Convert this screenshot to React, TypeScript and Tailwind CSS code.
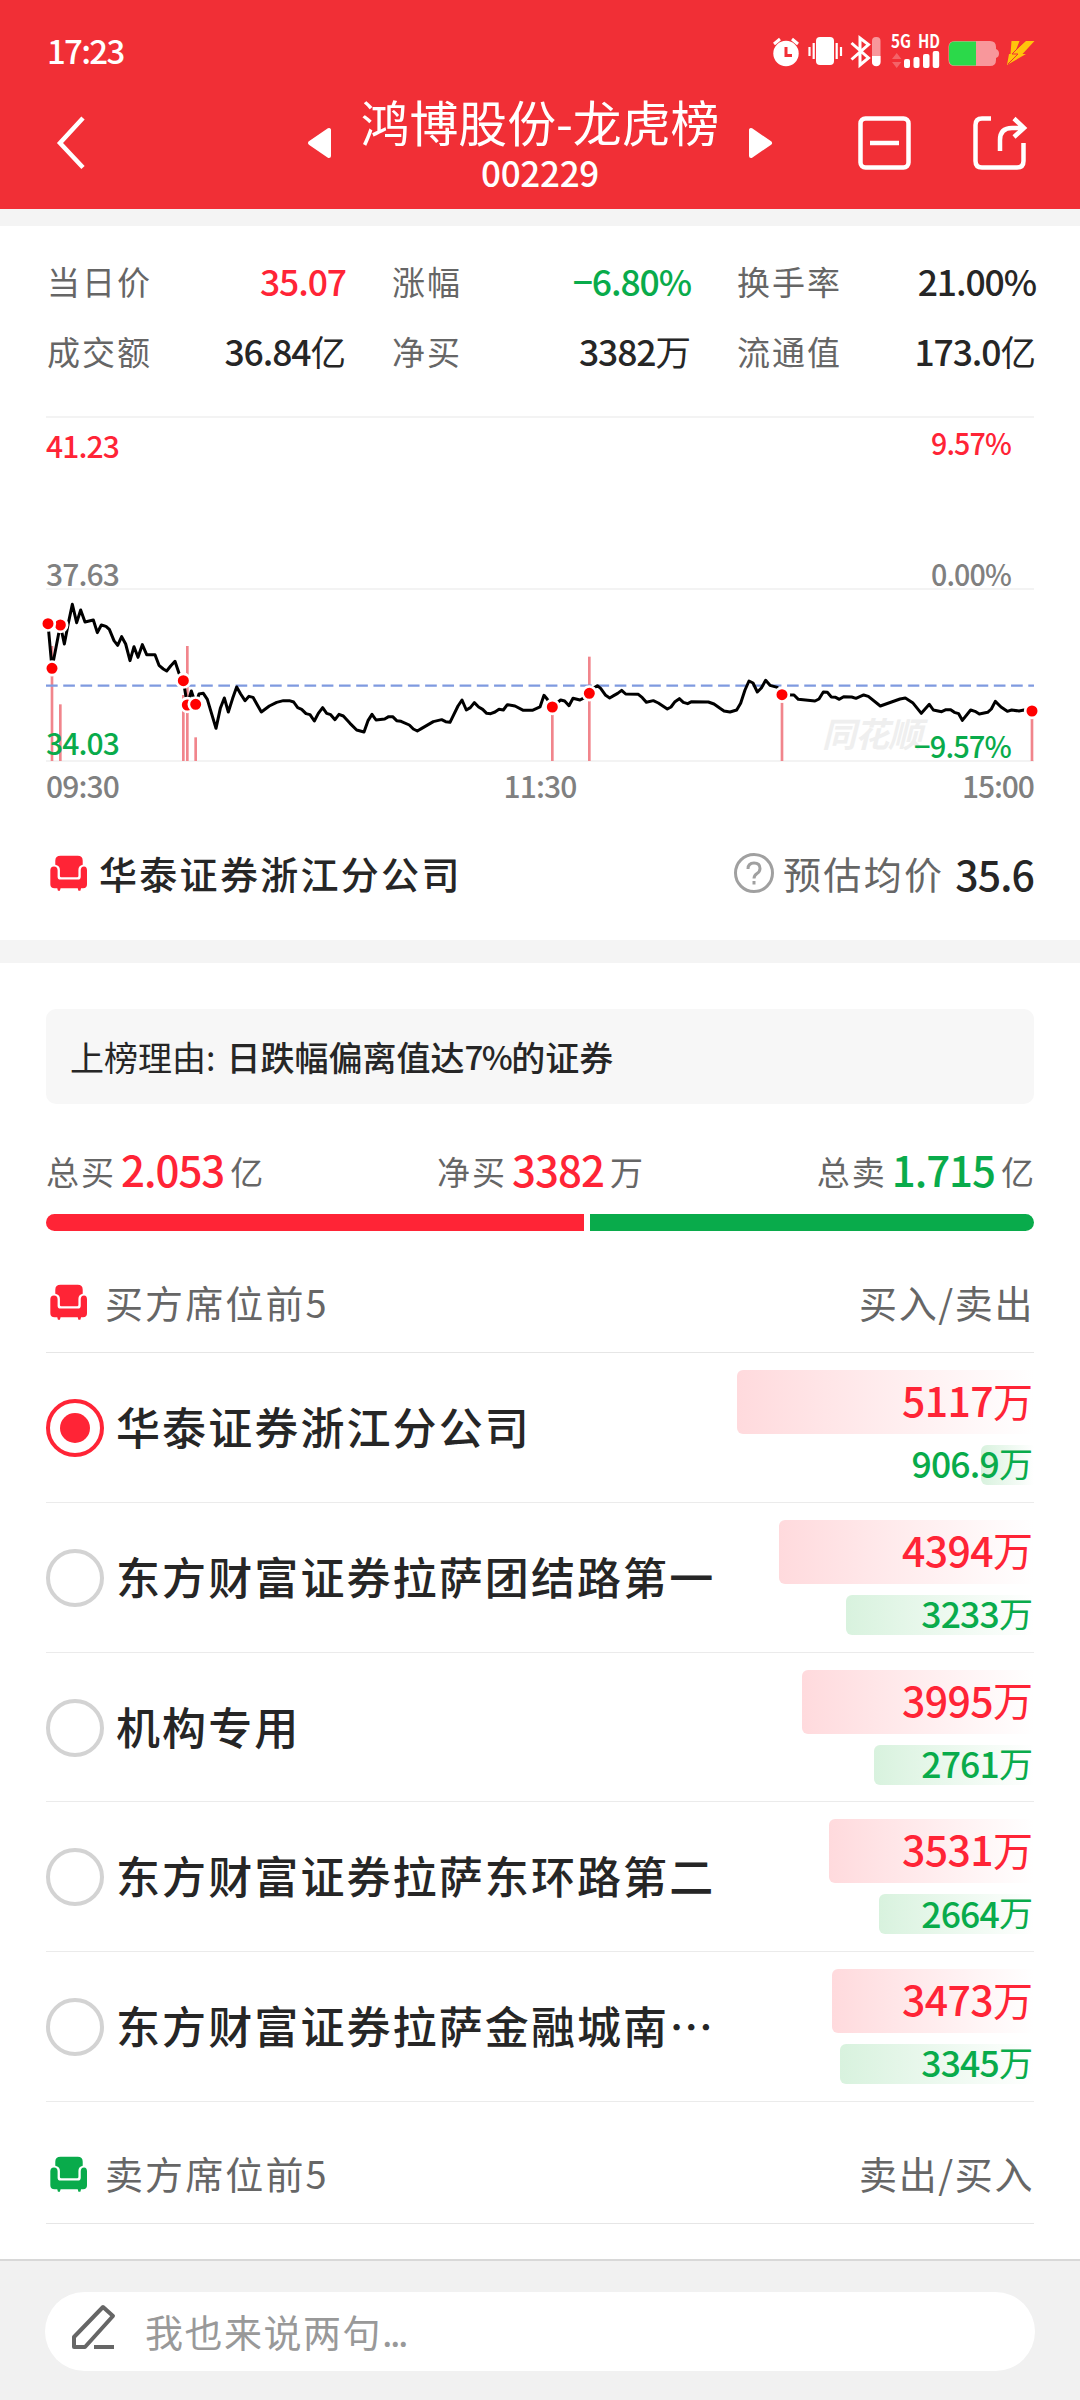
import React from "react";

const RED = "#ff2436";
const GREEN = "#09ab4b";

const quotes = [
  { label: "当日价", value: "35.07", unit: "", color: "text-[#ff2436]" },
  { label: "涨幅", value: "−6.80%", unit: "", color: "text-[#09ab4b]" },
  { label: "换手率", value: "21.00%", unit: "", color: "text-[#262626]" },
  { label: "成交额", value: "36.84", unit: "亿", color: "text-[#262626]" },
  { label: "净买", value: "3382", unit: "万", color: "text-[#262626]" },
  { label: "流通值", value: "173.0", unit: "亿", color: "text-[#262626]" },
];

const seats = [
  { name: "华泰证券浙江分公司", buy: 5117, sell: 906.9 },
  { name: "东方财富证券拉萨团结路第一", buy: 4394, sell: 3233 },
  { name: "机构专用", buy: 3995, sell: 2761 },
  { name: "东方财富证券拉萨东环路第二", buy: 3531, sell: 2664 },
  { name: "东方财富证券拉萨金融城南⋯", buy: 3473, sell: 3345 },
];

// width in px of the bar for one 万
const BAR_SCALE = 297 / 5117;

const pricePoints =
  "144,191 156,325 181,195 193,252 205,190 217,133 230,188 242,150 255,186 280,180 292,218 304,195 318,199 328,208 342,242 353,256 365,230 377,252 390,302 402,260 414,292 427,254 440,284 465,284 477,316 490,327 500,333 512,318 525,304 537,340 550,362 562,435 574,393 587,433 597,402 610,400 622,418 648,505 661,445 673,414 685,456 698,415 710,381 722,402 735,422 747,409 759,412 784,456 808,438 830,427 850,422 868,422 881,426 893,443 905,448 918,461 930,464 943,483 955,460 968,443 980,460 992,464 1005,479 1017,463 1030,468 1050,490 1070,510 " +
  "1092,516 1104,482 1116,463 1128,480 1154,477 1166,470 1178,470 1190,482 1203,484 1228,495 1240,507 1252,513 1264,506 1300,485 1325,479 1337,485 1350,487 1374,438 1386,420 1399,450 1411,443 1423,428 1436,441 1448,448 1460,460 1472,461 1485,456 1497,448 1510,450 1522,434 1545,438 1570,451 1597,451 1620,441 1632,406 1642,418 1657,440 1682,420 1694,423 1707,437 1719,415 1740,420 1755,412 1768,400 1780,385 1792,377 1802,385 1817,406 1829,414 1841,407 1853,400 1865,391 1877,402 1915,403 1927,413 1939,427 1960,422 1975,429 2002,447 2013,441 2025,425 2038,416 2050,427 2063,431 2075,425 2125,426 2142,432 2160,445 " +
  "2172,453 2190,456 2210,450 2222,430 2235,390 2247,363 2259,369 2272,396 2284,384 2297,361 2310,376 2332,382 2346,404 2382,405 2395,418 2445,423 2457,417 2470,396 2482,397 2494,411 2507,412 2518,418 2531,410 2555,411 2568,415 2591,405 2605,409 2641,438 2700,417 2716,414 2738,428 2764,460 2788,433 2800,450 2825,455 2838,449 2852,449 2863,457 2876,461 2887,481 2912,450 2925,454 2938,462 2963,457 2974,447 2986,424 3003,441 3022,454 3035,450 3057,453 3072,450 3096,453";

const dots = [
  [181, 195],
  [144, 191],
  [156, 325],
  [550, 362],
  [562, 435],
  [587, 433],
  [1657, 441],
  [1768, 400],
  [2346, 404],
  [3096, 453],
];

const volumes = [
  [156, 258],
  [181, 433],
  [550, 405],
  [562, 258],
  [587, 532],
  [1657, 442],
  [1768, 290],
  [2346, 428],
  [3096, 470],
];

function Sofa({ color }: { color: string }) {
  return (
    <svg width="37" height="37" viewBox="32 32 112 111" className="mr-px ml-[4px] shrink-0">
      <path
        fill={color}
        d="M64 34h52q15 0 15 15v12q-13 3-13 16v18q0 4-4 4H66q-4 0-4-4V77q0-13-14-16V49q0-15 16-15z"
      />
      <path
        fill={color}
        d="M44 66q11 0 11 12v19q0 9 9 9h52q9 0 9-9V78q0-12 10-12 9 0 9 12v42q0 12-12 12h-6l-2 8h-6l-2-8H64l-2 8h-6l-2-8h-8q-13 0-13-12V78q0-12 11-12z"
      />
    </svg>
  );
}

function StatusIcons() {
  return (
    <svg width="270" height="54" viewBox="770 22 270 54" fill="#fff">
      <circle cx="786" cy="53.5" r="12.7" />
      <path d="M774 44l6-5M798 44l-6-5" stroke="#fff" strokeWidth="3" />
      <path d="M786 47v8.5h6" fill="none" stroke="#f12f36" strokeWidth="3" />
      <rect x="816" y="37" width="18" height="28" rx="4" />
      <path d="M809.5 47v9M813.7 43v16M836.7 43v16M841 47v9" stroke="#fff" strokeWidth="2.2" />
      <path d="M851.5 43l17 15-8.5 7V38l8.500 6.500-17 15" fill="none" stroke="#fff" strokeWidth="3" />
      <rect x="872" y="37" width="8.5" height="29" rx="4" fillOpacity=".5" />
      <path d="M872 56h8.500v6a4.200 4.200 0 0 1-8.500 0z" />
      <text x="891" y="48" fontSize="18" fontWeight="700" textLength="20" lengthAdjust="spacingAndGlyphs">
        5G
      </text>
      <text x="918" y="48" fontSize="18" fontWeight="700" textLength="22" lengthAdjust="spacingAndGlyphs">
        HD
      </text>
      <path d="M892 59l4.700-6 4.700 6zM892 62l4.700 6 4.700-6z" fillOpacity=".25" />
      <rect x="904" y="59" width="6" height="9" rx="2" />
      <rect x="913.5" y="57" width="6" height="11" rx="2" />
      <rect x="923" y="54" width="6.5" height="14" rx="2" />
      <rect x="932.7" y="51" width="6.5" height="17" rx="2" />
      <path
        d="M955 41h35q6 0 6 6v2q3 1 3 4.500t-3 4.500v2q0 6-6 6h-35q-6.500 0-6.500-6V47q0-6 6.500-6z"
        fillOpacity=".5"
      />
      <path d="M976 41.500v24h-21q-6 0-6-6V47q0-5.500 6-5.500z" fill="#2bd94a" />
      <path d="M1011.500 41h8l-3.500 9 10-9h8.500l-12 13h3.500L1007 65l2-11h1.500z" fill="#ffc40c" />
      <path d="M1024 42l-12 12h6l-10 10" fill="none" stroke="#f12f36" strokeWidth="1" />
    </svg>
  );
}

function Header() {
  return (
    <header className="h-[209px] bg-[#f12f36] text-white">
      <div className="flex h-[104px] items-start justify-between pt-[22px] pr-[40px] pl-[47px]">
        <span className="mt-[12px] text-[33px] font-medium tracking-[-1.7px]">17:23</span>
        <StatusIcons />
      </div>
      <div className="flex h-[78px] items-center">
        <svg width="32" height="56" viewBox="0 0 32 56" className="ml-[55px]">
          <path d="M28 3L5 28l23 24.500" fill="none" stroke="#fff" strokeWidth="4.5" />
        </svg>
        <svg width="26" height="32" viewBox="0 0 26 32" className="ml-[220px]">
          <path d="M3 16L22 3v26z" fill="#fff" stroke="#fff" strokeWidth="4" strokeLinejoin="round" />
        </svg>
        <div className="flex w-[414px] flex-col items-center leading-none">
          <h1 className="mt-[-3px] text-[48.8px] whitespace-nowrap">鸿博股份-龙虎榜</h1>
          <p className="mt-[12px] text-[35px] leading-[28px] font-medium tracking-[-.3px]">002229</p>
        </div>
        <svg width="26" height="32" viewBox="0 0 26 32">
          <path d="M23 16L4 3v26z" fill="#fff" stroke="#fff" strokeWidth="4" strokeLinejoin="round" />
        </svg>
        <svg width="54" height="54" viewBox="0 0 54 54" className="ml-[85px]" fill="none" stroke="#fff" strokeWidth="4.5">
          <rect x="2.5" y="2.5" width="48" height="49" rx="5" />
          <path d="M12 27h29" />
        </svg>
        <svg width="56" height="54" viewBox="0 0 56 54" className="ml-[61px]" fill="none" stroke="#fff" strokeWidth="4.5">
          <path d="M18 2.500H9q-6.500 0-6.500 6.500v36q0 6.500 6.500 6.500h35q6.500 0 6.500-6.500V27" />
          <path d="M27 35V24q0-12 12-12h11M41 2.500l10 9.500-10 9" />
        </svg>
      </div>
    </header>
  );
}

function Chart() {
  return (
    <svg width="1080" height="400" viewBox="0 410 1080 400" className="block" fontSize="30" letterSpacing="-.9">
      <path d="M46 417h988M46 589h988M46 761h988" stroke="#f3f3f3" strokeWidth="2" />
      <text x="822" y="747" fontSize="34" fontWeight="700" fontStyle="italic" fill="#efefef">
        同花顺
      </text>
      <g transform="translate(0 560) scale(.33333)">
        {volumes.map(([x, y]) => (
          <path key={x} d={`M${x} ${y}V603`} stroke="#f1858c" strokeWidth="8" />
        ))}
        <path d="M138 377H3102" stroke="#7f9ae0" strokeWidth="6.5" strokeDasharray="35 16.7" />
        <polyline points={pricePoints} fill="none" stroke="#000" strokeWidth="9" strokeLinejoin="round" />
        {dots.map(([x, y]) => (
          <circle key={x} cx={x} cy={y} r="20.5" fill="#f00" stroke="#fff" strokeWidth="8" />
        ))}
      </g>
      <g fontWeight="500">
        <text x="46" y="458" fill={RED}>41.23</text>
        <text x="46" y="585.5" fill="#808080">37.63</text>
        <text x="46" y="755" fill={GREEN}>34.03</text>
        <text x="46" y="798" fill="#808080">09:30</text>
        <text x="540" y="798" fill="#808080" textAnchor="middle">11:30</text>
        <text x="962" y="798" fill="#808080" textLength="72">15:00</text>
        <text x="931" y="455" fill={RED} textLength="80" lengthAdjust="spacingAndGlyphs">9.57%</text>
        <text x="931" y="585.5" fill="#808080" textLength="80" lengthAdjust="spacingAndGlyphs">0.00%</text>
        <text x="914" y="757.5" fill={GREEN} textLength="97" lengthAdjust="spacingAndGlyphs">−9.57%</text>
      </g>
    </svg>
  );
}

function Total({ label, value, unit, color }: { label: string; value: string; unit: string; color: string }) {
  return (
    <div className="flex items-baseline text-[33px] tracking-[2px] text-[#666]">
      <span className="relative top-[-2px]">{label}</span>
      <span className={`mr-[6px] ml-[5px] text-[42px] font-medium tracking-[-1px] ${color}`}>{value}</span>
      <span className="relative top-[-2px] tracking-normal">{unit}</span>
    </div>
  );
}

function SeatHeader({ title, right, color }: { title: string; right: string; color: string }) {
  return (
    <div className="flex items-center text-[38px] tracking-[2.1px] text-[#666]">
      <Sofa color={color} />
      <span className="mt-[-2px] ml-[17px]">{title}</span>
      <span className="mt-[-2px] ml-auto tracking-[1.6px]">{right}</span>
    </div>
  );
}

function SeatRow({ name, buy, sell, selected }: { name: string; buy: number; sell: number; selected: boolean }) {
  return (
    <li className="flex h-[149.8px] items-start border-b border-[#ebebeb] leading-none">
      <span
        className={`mt-[46px] flex size-[58px] items-center justify-center rounded-full border-[4.5px] ${
          selected ? "border-[#ff2436]" : "border-[#d3d3d3]"
        }`}
      >
        {selected && <span className="size-[30px] rounded-full bg-[#ff2436]" />}
      </span>
      <span className="mt-[51px] ml-[12px] text-[44px] font-medium tracking-[2.1px] whitespace-nowrap text-[#262626]">
        {name}
      </span>
      <div className="ml-auto flex flex-col items-end">
        <div
          className="mt-[17px] flex h-[64px] items-center justify-end rounded-l-[6px] bg-gradient-to-r from-[#ffdadd] to-white pr-[1px] pb-[5px] text-[41px] text-[#ff2436]"
          style={{ width: buy * BAR_SCALE }}
        >
          <span className="font-medium tracking-[-.6px]">{buy}</span>
          <span className="text-[40px]">万</span>
        </div>
        <div
          className="mt-[11px] flex h-[40px] items-center justify-end rounded-l-[6px] bg-gradient-to-r from-[#d8f2de] to-white pr-[1px] pb-[4px] text-[35.5px] text-[#09ab4b]"
          style={{ width: sell * BAR_SCALE }}
        >
          <span className="font-medium tracking-[-.8px]">{sell}</span>
          <span className="text-[34px]">万</span>
        </div>
      </div>
    </li>
  );
}

export default function App() {
  return (
    <div
      lang="zh-CN"
      className="flex h-[2400px] w-[1080px] flex-col overflow-hidden bg-white font-['Noto_Sans_CJK_SC',sans-serif] leading-none"
    >
      <Header />
      <div className="h-[17px] bg-[#f4f4f4]" />

      <section className="grid grid-cols-3 gap-x-[46px] pt-[20px] pr-[44px] pb-[2px] pl-[47px]">
        {quotes.map((q) => (
          <div key={q.label} className="flex h-[70px] items-center justify-between">
            <span className="text-[33px] tracking-[2px] text-[#666]">{q.label}</span>
            <span className={`flex text-[35.5px] ${q.color}`}>
              <span className="font-medium tracking-[-1.1px]">{q.value}</span>
              {q.unit}
            </span>
          </div>
        ))}
      </section>
      <div className="mt-[22px]">
        <Chart />
      </div>

      <section className="flex h-[130px] items-center px-[46px] pb-[4px] text-[38px]">
        <Sofa color={RED} />
        <span className="ml-[11px] font-medium tracking-[2.3px] text-[#262626]">华泰证券浙江分公司</span>
        <svg width="42" height="42" viewBox="0 0 42 42" className="ml-auto" fill="none" stroke="#a0a0a0" strokeWidth="3">
          <circle cx="21" cy="21" r="18.5" />
          <path d="M15 17q0-6 6-6t6 5.500q0 3-3 5-3 2-3 5" />
          <path d="M21 29v3.500" />
        </svg>
        <span className="ml-[8px] tracking-[2.3px] text-[#666]">预估均价</span>
        <span className="ml-[11px] text-[41px] font-medium tracking-[-.9px] text-[#262626]">35.6</span>
      </section>
      <div className="h-[23px] bg-[#f4f4f4]" />

      <main className="flex flex-col px-[46px]">
        <div className="mt-[46px] flex h-[95px] items-center rounded-[10px] bg-[#f7f7f7] pl-[24px] text-[34px] text-[#262626]">
          <span>上榜理由:</span>
          <span className="ml-[11px] flex font-medium">
            日跌幅偏离值达
            <span className="text-[33px] tracking-[-1.5px]">7%</span>
            的证券
          </span>
        </div>
        <div className="mt-[40px] flex h-[50px] items-center justify-between">
          <Total label="总买" value="2.053" unit="亿" color="text-[#ff2436]" />
          <Total label="净买" value="3382" unit="万" color="text-[#ff2436]" />
          <Total label="总卖" value="1.715" unit="亿" color="text-[#09ab4b]" />
        </div>
        <div className="mt-[20px] flex h-[17px] gap-[6px] overflow-hidden rounded-full">
          <div className="w-[538px] bg-[#ff2436]" />
          <div className="flex-1 bg-[#09ab4b]" />
        </div>
        <div className="flex h-[122px] flex-col justify-center border-b border-[#e6e6e6] pt-[22px]">
          <SeatHeader title="买方席位前5" right="买入/卖出" color={RED} />
        </div>
        <ul>
          {seats.map((seat, i) => (
            <SeatRow key={seat.name} {...seat} selected={i === 0} />
          ))}
        </ul>
        <div className="flex h-[122px] flex-col justify-center border-b border-[#e6e6e6] pt-[24px]">
          <SeatHeader title="卖方席位前5" right="卖出/买入" color={GREEN} />
        </div>
      </main>

      <footer className="mt-auto flex h-[141px] justify-center border-t-2 border-[#d8d8d8] bg-[#f1f1f1] pt-[31px]">
        <div className="flex h-[79px] w-[990px] items-center rounded-full bg-white pl-[25px]">
          <svg
            width="46"
            height="48"
            viewBox="0 0 46 48"
            fill="none"
            stroke="#666"
            strokeWidth="4"
            strokeLinejoin="round"
            className="mt-[-9px]"
          >
            <path d="M33 4l10 9-28 31H4V34z" />
            <path d="M24 44h20" />
          </svg>
          <span className="mt-[-2px] ml-[29px] text-[38px] tracking-[1.5px] text-[#999]">
            我也来说两句<span className="tracking-[-2.6px]">...</span>
          </span>
        </div>
      </footer>
    </div>
  );
}
